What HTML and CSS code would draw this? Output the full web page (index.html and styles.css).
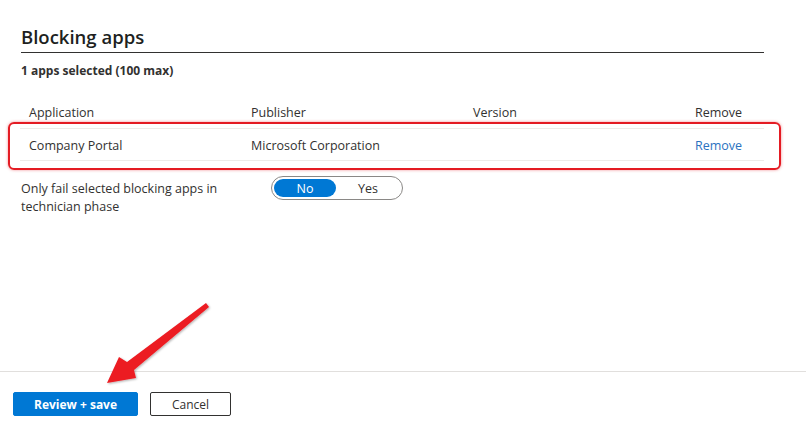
FILE: index.html
```html
<!DOCTYPE html>
<html>
<head>
<meta charset="utf-8">
<link rel="stylesheet" href="styles.css">
</head>
<body>
<div class="page">
  <main class="panel">
    <h2 class="title">Blocking apps</h2>
    <div class="count">1 apps selected (100 max)</div>
    <div class="table">
      <div class="row head">
        <span>Application</span><span>Publisher</span><span>Version</span><span>Remove</span>
      </div>
      <div class="row data">
        <span>Company Portal</span><span>Microsoft Corporation</span><span></span><a class="link">Remove</a>
      </div>
      <div class="highlight"></div>
    </div>
    <div class="option">
      <div class="opt-label">Only fail selected blocking apps in technician phase</div>
      <div class="toggle">
        <span class="seg on">No</span><span class="seg">Yes</span>
      </div>
    </div>
  </main>
  <footer class="footer">
    <button class="btn primary">Review + save</button>
    <button class="btn secondary">Cancel</button>
  </footer>
  <svg class="arrow" width="806" height="426" viewBox="0 0 806 426">
    <defs>
      <filter id="sh" x="-20%" y="-20%" width="140%" height="140%">
        <feDropShadow dx="1" dy="1" stdDeviation="1.2" flood-color="#000" flood-opacity="0.3"/>
      </filter>
    </defs>
    <polygon filter="url(#sh)" fill="#ec1c24" points="206,303 209,307 134,370 136,378 107,383 119,357 127,362"/>
  </svg>
</div>
</body>
</html>
```
FILE: styles.css
```css
* { box-sizing: border-box; }
html, body { margin: 0; padding: 0; background: #fff; }
body {
  font-family: "Segoe UI", "Open Sans", "Noto Sans", sans-serif;
  color: #323130;
  width: 806px;
  height: 426px;
  overflow: hidden;
}
.page {
  position: relative;
  height: 426px;
  display: flex;
  flex-direction: column;
}
.panel {
  padding: 23px 0 0 21px;
  width: 764px;
  flex: 1;
}
.title {
  margin: 0;
  font-size: 18.5px;
  font-weight: 600;
  line-height: 28px;
  padding-bottom: 1px;
  border-bottom: 1px solid #323130;
  color: #201f1e;
}
.count {
  font-size: 12px;
  font-weight: 700;
  margin-top: 10px;
  line-height: 16px;
}
.table {
  position: relative;
  margin-top: 22px;
  margin-left: -1px;
}
.row {
  display: grid;
  grid-template-columns: 222px 222px 222px 1fr;
  padding-left: 9px;
  font-size: 12.5px;
  align-items: center;
}
.row.head { height: 22px; line-height: 18px; padding-top: 1px; }
.row.data {
  height: 33px;
  border-top: 1px solid #edebe9;
  border-bottom: 1px solid #edebe9;
  margin-top: 5px;
  padding-top: 2px;
}
.link { color: #2a72c0; cursor: pointer; }
.highlight {
  position: absolute;
  left: -12px;
  top: 21px;
  width: 773px;
  height: 48px;
  border: 2px solid #e41b23;
  border-radius: 6px;
  box-shadow: 0 0 3px rgba(228, 27, 35, 0.5);
}
.option {
  display: flex;
  align-items: flex-start;
  margin-top: 19px;
}
.opt-label {
  width: 250px;
  font-size: 12.5px;
  line-height: 18px;
}
.toggle {
  display: flex;
  width: 132px;
  height: 24px;
  border: 1px solid #8a8886;
  border-radius: 12px;
  padding: 2px;
  margin-top: -4px;
}
.seg {
  flex: 1;
  display: flex;
  align-items: center;
  justify-content: center;
  font-size: 12.5px;
  border-radius: 9px;
}
.seg.on { background: #0078d4; color: #fff; flex: 0 0 62px; }
.footer {
  border-top: 1px solid #e1dfdd;
  height: 55px;
  padding: 20px 0 0 13px;
  display: flex;
  gap: 12px;
  align-items: flex-start;
}
.btn {
  font-family: inherit;
  font-size: 12px;
  height: 24px;
  padding: 0;
  border-radius: 2px;
  cursor: pointer;
}
.btn.primary {
  width: 125px;
  background: #0078d4;
  border: 1px solid #0078d4;
  color: #fff;
  font-weight: 700;
}
.btn.secondary {
  width: 81px;
  background: #fff;
  border: 1px solid #323130;
  color: #323130;
}
.arrow {
  position: absolute;
  left: 0;
  top: 0;
  pointer-events: none;
}
```
